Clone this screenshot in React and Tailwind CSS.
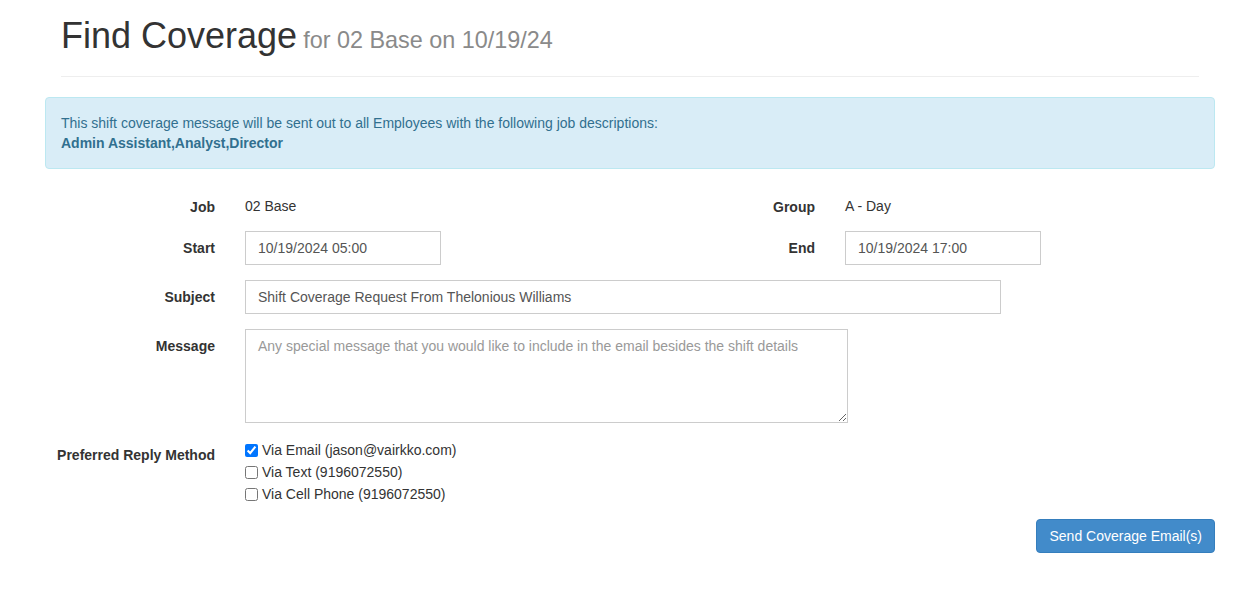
import React from 'react';

const font = { fontFamily: '"Liberation Sans", Arial, sans-serif' };

const App = () => {
  return (
    <div className="min-h-screen bg-white text-[#333] text-[14px] leading-[20px]" style={font}>
      <div className="ml-[45px] w-[1170px]">
        {/* header */}
        <div className="px-[16px]">
          <div className="pt-[16px] pb-[16px] border-b border-[#eee]">
            <h1 className="text-[36px] leading-[40px] font-normal text-[#333]">
              Find Coverage<small className="ml-[6px] text-[23.4px] text-[#8a8a8a]">for 02 Base on 10/19/24</small>
            </h1>
          </div>
        </div>

        {/* info alert */}
        <div className="mt-[20px] border border-[#bce8f1] bg-[#d9edf7] text-[#31708f] rounded-[4px] p-[15px]">
          <div>This shift coverage message will be sent out to all Employees with the following job descriptions:</div>
          <div className="font-bold">Admin Assistant,Analyst,Director</div>
        </div>

        {/* form */}
        <div className="mt-[21px]">
          <div className="flex">
            <div className="flex w-[585px]">
              <label className="w-[185px] pr-[15px] pt-[7px] text-right font-bold">Job</label>
              <div className="pl-[15px] pt-[6px]">02 Base</div>
            </div>
            <div className="flex">
              <label className="w-[200px] pr-[15px] pt-[7px] text-right font-bold">Group</label>
              <div className="pl-[15px] pt-[6px]">A - Day</div>
            </div>
          </div>

          <div className="flex mt-[14px]">
            <div className="flex w-[585px]">
              <label className="w-[185px] pr-[15px] pt-[7px] text-right font-bold">Start</label>
              <div className="pl-[15px]">
                <input
                  defaultValue="10/19/2024 05:00"
                  className="w-[196px] h-[34px] border border-[#ccc] px-[12px] py-[6px] text-[#555] outline-none"
                  style={font}
                />
              </div>
            </div>
            <div className="flex">
              <label className="w-[200px] pr-[15px] pt-[7px] text-right font-bold">End</label>
              <div className="pl-[15px]">
                <input
                  defaultValue="10/19/2024 17:00"
                  className="w-[196px] h-[34px] border border-[#ccc] px-[12px] py-[6px] text-[#555] outline-none"
                  style={font}
                />
              </div>
            </div>
          </div>

          <div className="flex mt-[15px]">
            <label className="w-[185px] pr-[15px] pt-[7px] text-right font-bold">Subject</label>
            <div className="pl-[15px]">
              <input
                defaultValue="Shift Coverage Request From Thelonious Williams"
                className="w-[756px] h-[34px] border border-[#ccc] px-[12px] py-[6px] text-[#555] outline-none"
                style={font}
              />
            </div>
          </div>

          <div className="flex mt-[15px]">
            <label className="w-[185px] pr-[15px] pt-[7px] text-right font-bold">Message</label>
            <div className="pl-[15px] flex">
              <textarea
                placeholder="Any special message that you would like to include in the email besides the shift details"
                className="w-[603px] h-[94px] border border-[#ccc] px-[12px] py-[6px] text-[#555] placeholder:text-[#999] outline-none"
                style={font}
              />
            </div>
          </div>

          <div className="flex mt-[15px]">
            <label className="w-[185px] pr-[15px] pt-[7px] text-right font-bold">Preferred Reply Method</label>
            <div className="pl-[15px] pt-[1px]">
              {[
                ['Via Email (jason@vairkko.com)', true],
                ['Via Text (9196072550)', false],
                ['Via Cell Phone (9196072550)', false],
              ].map(([text, checked]) => (
                <label key={text} className="flex items-center h-[22px]">
                  <input type="checkbox" defaultChecked={checked} className="w-[13px] h-[13px] m-0 mr-[4px]" />
                  <span>{text}</span>
                </label>
              ))}
            </div>
          </div>

          <div className="flex justify-end mt-[14px]">
            <button className="h-[34px] px-[12px] bg-[#428bca] border border-[#357ebd] rounded-[4px] text-white">
              Send Coverage Email(s)
            </button>
          </div>
        </div>
      </div>
    </div>
  );
};

export default App;
